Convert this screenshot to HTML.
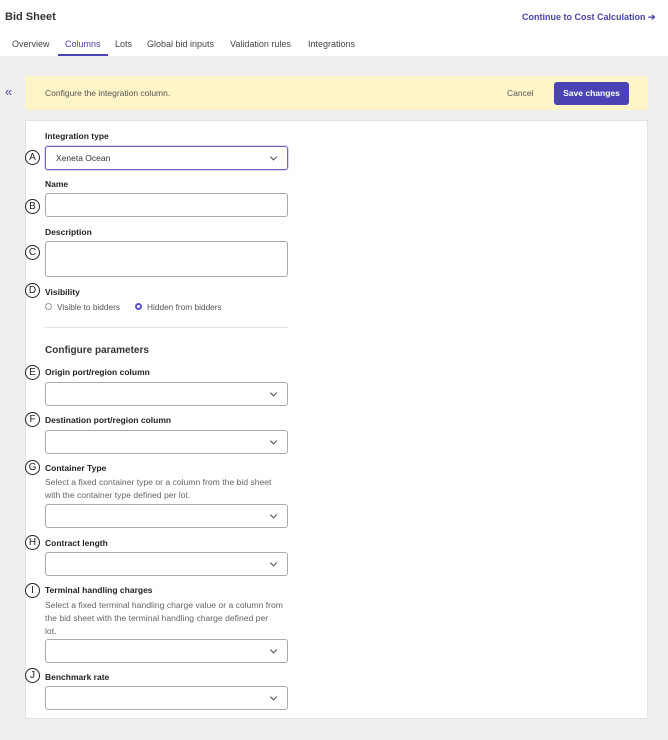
<!DOCTYPE html>
<html><head><meta charset="utf-8"><style>
*{box-sizing:border-box;margin:0;padding:0}
body{width:668px;height:740px;background:#fff;font-family:"Liberation Sans",sans-serif;color:#222;position:relative;overflow:hidden}
.a{position:absolute;white-space:nowrap}
.lab{position:absolute;left:45px;font-size:8.5px;font-weight:bold;color:#222}
.desc{position:absolute;left:45px;font-size:8.6px;color:#666;line-height:13px;width:243px}
.box{position:absolute;left:45px;width:243px;border:1px solid #aaa;border-radius:3px;background:#fff}
.chev{position:absolute;right:11px;top:50%;width:5px;height:5px;border-right:1.2px solid #444;border-bottom:1.2px solid #444;transform:translateY(-70%) rotate(45deg)}
.c{position:absolute;left:25px;width:15px;height:15px;border:1.2px solid #222;border-radius:50%;font-size:10px;text-align:center;line-height:13px;color:#222;background:#fff}
</style></head><body>
<div class="a" style="left:5px;top:11px;font-size:11px;font-weight:bold;color:#333">Bid Sheet</div>
<div class="a" style="left:522px;top:12px;font-size:9px;font-weight:bold;color:#4a45a8">Continue to Cost Calculation ➔</div>
<div class="a" style="left:12px;top:39px;font-size:9px;color:#444">Overview</div>
<div class="a" style="left:65px;top:39px;font-size:9px;color:#4a45a8">Columns</div>
<div class="a" style="left:58px;top:54px;width:50px;height:2px;background:#4a45b8"></div>
<div class="a" style="left:115px;top:39px;font-size:9px;color:#444">Lots</div>
<div class="a" style="left:147px;top:39px;font-size:9px;color:#444">Global bid inputs</div>
<div class="a" style="left:230px;top:39px;font-size:9px;color:#444">Validation rules</div>
<div class="a" style="left:308px;top:39px;font-size:9px;color:#444">Integrations</div>
<div class="a" style="left:0;top:56px;width:668px;height:684px;background:#efefee"></div>
<div class="a" style="left:5px;top:84px;font-size:13px;color:#4a45a8">«</div>
<div class="a" style="left:25px;top:76px;width:623px;height:34px;background:#fdf5c8;border-radius:3px"></div>
<div class="a" style="left:45px;top:88px;font-size:8.5px;color:#555">Configure the integration column.</div>
<div class="a" style="left:507px;top:88px;font-size:8.5px;color:#555">Cancel</div>
<div class="a" style="left:554px;top:82px;width:75px;height:23px;background:#4a42b5;border-radius:3px;color:#fff;font-size:8.5px;font-weight:bold;text-align:center;line-height:23px">Save changes</div>
<div class="a" style="left:25px;top:120px;width:623px;height:599px;background:#fff;border:1px solid #e2e2e2"></div>

<div class="lab" style="top:131px">Integration type</div>
<div class="box" style="top:146px;height:24px;border:1.5px solid #6a66cc;box-shadow:0 0 0 1px #d9d7f3"><span class="a" style="left:10px;top:6px;font-size:8.5px;color:#333">Xeneta Ocean</span><i class="chev"></i></div>
<div class="c" style="top:150px">A</div>

<div class="lab" style="top:179px">Name</div>
<div class="box" style="top:193px;height:24px"></div>
<div class="c" style="top:199px">B</div>

<div class="lab" style="top:227px">Description</div>
<div class="box" style="top:241px;height:36px"></div>
<div class="c" style="top:245px">C</div>

<div class="lab" style="top:287px">Visibility</div>
<div class="c" style="top:283px">D</div>
<div class="a" style="left:45px;top:303px;width:7px;height:7px;border:1px solid #999;border-radius:50%"></div>
<div class="a" style="left:57px;top:302px;font-size:8.3px;color:#555">Visible to bidders</div>
<div class="a" style="left:135px;top:303px;width:7px;height:7px;border:2px solid #5a55c0;border-radius:50%;background:#fff"></div>
<div class="a" style="left:147px;top:302px;font-size:8.3px;color:#555">Hidden from bidders</div>
<div class="a" style="left:45px;top:327px;width:243px;height:1px;background:#e2e2e2"></div>
<div class="a" style="left:45px;top:345px;font-size:10px;font-weight:bold;color:#333">Configure parameters</div>

<div class="lab" style="top:367px">Origin port/region column</div>
<div class="c" style="top:365px">E</div>
<div class="box" style="top:382px;height:24px"><i class="chev"></i></div>

<div class="lab" style="top:415px">Destination port/region column</div>
<div class="c" style="top:412px">F</div>
<div class="box" style="top:430px;height:24px"><i class="chev"></i></div>

<div class="lab" style="top:463px">Container Type</div>
<div class="c" style="top:460px">G</div>
<div class="desc" style="top:476px">Select a fixed container type or a column from the bid sheet with the container type defined per lot.</div>
<div class="box" style="top:504px;height:24px"><i class="chev"></i></div>

<div class="lab" style="top:538px">Contract length</div>
<div class="c" style="top:535px">H</div>
<div class="box" style="top:552px;height:24px"><i class="chev"></i></div>

<div class="lab" style="top:585px">Terminal handling charges</div>
<div class="c" style="top:583px">I</div>
<div class="desc" style="top:599px">Select a fixed terminal handling charge value or a column from<br>the bid sheet with the terminal handling charge defined per<br>lot.</div>
<div class="box" style="top:639px;height:24px"><i class="chev"></i></div>

<div class="lab" style="top:672px">Benchmark rate</div>
<div class="c" style="top:668px">J</div>
<div class="box" style="top:686px;height:24px"><i class="chev"></i></div>
</body></html>
